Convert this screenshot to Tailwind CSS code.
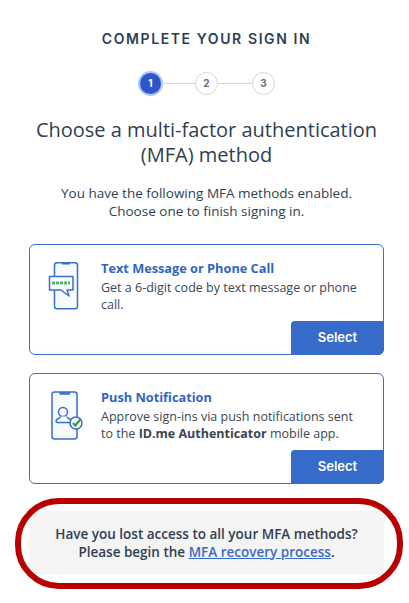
<!DOCTYPE html>
<html lang="en">
<head>
<meta charset="UTF-8">
<title>Complete your sign in</title>
<script src="https://cdn.jsdelivr.net/npm/@tailwindcss/browser@4"></script>
</head>
<body class="bg-white font-['Open_Sans',sans-serif] text-[#2e3f51] overflow-hidden">
<div class="relative w-[409px] h-[603px] overflow-hidden pl-[29px] pr-[25px] pt-[30px]">
  <h1 class="text-center font-['Inter',sans-serif] font-semibold text-[14px] leading-[18px] tracking-[1.6px]">COMPLETE YOUR SIGN IN</h1>

  <div class="mt-[24px] pl-[2px] flex items-center justify-center h-[23px]">
    <span class="w-[21px] h-[21px] rounded-full bg-[#2f55c8] ring-2 ring-[#a9c6f5] text-white text-[10px] font-bold flex items-center justify-center font-['Inter',sans-serif]">1</span>
    <span class="w-[34px] h-px bg-[#d5d5d5]"></span>
    <span class="w-[23px] h-[23px] rounded-full border border-[#d5d5d5] text-[#6b6b6b] text-[10px] font-bold flex items-center justify-center font-['Inter',sans-serif]">2</span>
    <span class="w-[34px] h-px bg-[#d5d5d5]"></span>
    <span class="w-[23px] h-[23px] rounded-full border border-[#d5d5d5] text-[#6b6b6b] text-[10px] font-bold flex items-center justify-center font-['Inter',sans-serif]">3</span>
  </div>

  <h2 class="mt-[22px] text-center text-[20px] leading-[25px]">Choose a multi-factor authentication<br>(MFA) method</h2>
  <p class="mt-[17px] text-center text-[13.5px] leading-[18px]">You have the following MFA methods enabled.<br>Choose one to finish signing in.</p>

  <div class="mt-[24px] flex flex-col gap-[18px]">
    <div class="relative h-[111px] border border-[#3a6ecb] rounded-[6px] flex">
      <div class="w-[71px] shrink-0 pl-[18px] pt-[17px]">
        <svg width="34" height="50" viewBox="0 0 34 50" fill="none">
          <rect x="6.5" y="0.75" width="23" height="46" rx="2.5" fill="#f6f9fe" stroke="#3a6ecb" stroke-width="1.5"/>
          <path d="M14 1.5h8" stroke="#3a6ecb" stroke-width="2"/>
          <path d="M1.500 14.500h23.500v13.500h-6l2 6-8-6H1.500z" fill="#fff" stroke="#3a6ecb" stroke-width="1.500" stroke-linejoin="round"/>
          <path d="M4 21h18" stroke="#48b97a" stroke-width="3" stroke-dasharray="3 1"/>
        </svg>
      </div>
      <div class="pt-[14px] pr-[25px]">
        <div class="text-[#2f66c4] text-[12.75px] leading-[18px] font-bold">Text Message or Phone Call</div>
        <div class="mt-[2px] text-[12.5px] leading-[17px] text-[#3a4654]">Get a 6-digit code by text message or phone call.</div>
      </div>
      <button class="absolute right-[-1px] bottom-[-1px] w-[93px] h-[34px] bg-[#366bc9] text-white text-[13px] font-semibold font-['Inter',sans-serif] rounded-tl-[4px] rounded-br-[6px]">Select</button>
    </div>

    <div class="relative h-[111px] border border-[#3a6ecb] rounded-[6px] flex">
      <div class="w-[71px] shrink-0 pl-[21px] pt-[17px]">
        <svg width="34" height="50" viewBox="0 0 34 50" fill="none">
          <rect x="1" y="1" width="25" height="47" rx="2.5" fill="#f6f9fe" stroke="#3a6ecb" stroke-width="1.5"/>
          <path d="M9.500 2.500h8.500" stroke="#3a6ecb" stroke-width="2.500" stroke-linecap="round"/>
          <circle cx="12" cy="21" r="4.500" fill="#fff" stroke="#3a6ecb" stroke-width="1.500"/>
          <path d="M9.500 25.500c.5 2-4.500 2-4.500 4.500 0 1 .5 1.500 1.500 1.500h12.500c1 0 1.500-.5 1.500-1.500 0-2.500-5-2.500-4.500-4.500" fill="#fff" stroke="#3a6ecb" stroke-width="1.500"/>
          <circle cx="25" cy="32" r="6" fill="#fff" stroke="#3a6ecb" stroke-width="1.500"/>
          <path d="M22 32l2.300 2.500 5-6" stroke="#1fa35c" stroke-width="2.200"/>
        </svg>
      </div>
      <div class="pt-[14px] pr-[25px]">
        <div class="text-[#2f66c4] text-[12.75px] leading-[18px] font-bold">Push Notification</div>
        <div class="mt-[2px] text-[12.5px] leading-[17px] text-[#3a4654]">Approve sign-ins via push notifications sent to the <b>ID.me Authenticator</b> mobile app.</div>
      </div>
      <button class="absolute right-[-1px] bottom-[-1px] w-[93px] h-[34px] bg-[#366bc9] text-white text-[13px] font-semibold font-['Inter',sans-serif] rounded-tl-[4px] rounded-br-[6px]">Select</button>
    </div>
  </div>

  <div class="mt-[27px] h-[63px] bg-[#f4f4f4] flex flex-col justify-center text-center text-[13.5px] leading-[18px] font-semibold">
    <p>Have you lost access to all your MFA methods?</p>
    <p>Please begin the <a href="#" class="text-[#366bc9] underline">MFA recovery process</a>.</p>
  </div>

  <div class="absolute left-[15px] top-[498px] w-[388px] h-[91px] border-[6px] border-[#b90000] rounded-[44px]"></div>
</div>
</body>
</html>
